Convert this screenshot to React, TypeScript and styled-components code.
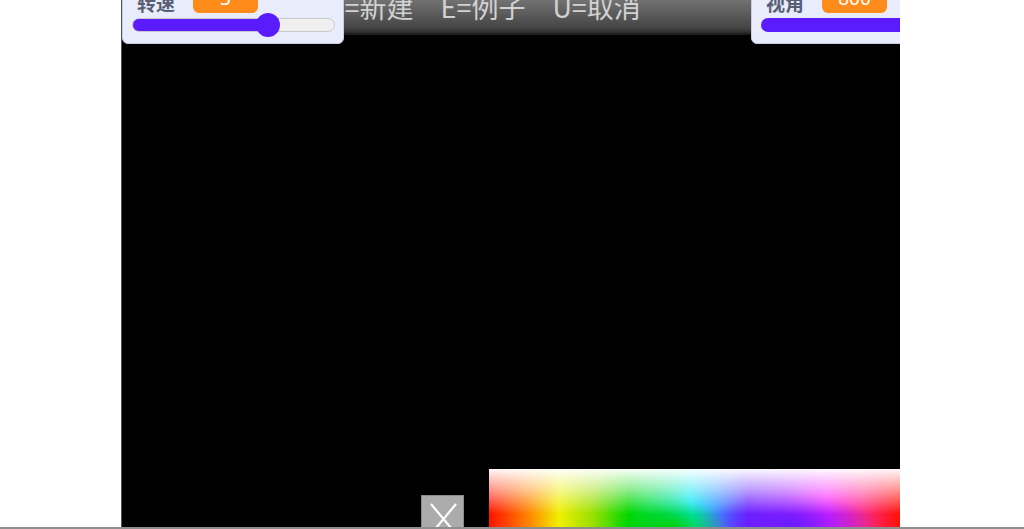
import React from "react";
import styled, { createGlobalStyle } from "styled-components";

const GlobalStyle = createGlobalStyle`
  html, body {
    margin: 0;
    padding: 0;
    background: #fff;
    overflow: hidden;
  }
  body {
    font-family: "Noto Sans CJK SC", "Noto Sans", sans-serif;
  }
`;

const Page = styled.div`
  width: 1024px;
  height: 529px;
  display: flex;
  flex-direction: row;
  box-sizing: border-box;
  border-bottom: 2px solid #8e8e8e;
  background: #fff;
`;

const Side = styled.div<{ $w: number }>`
  width: ${(p) => p.$w}px;
  flex-shrink: 0;
`;

const Stage = styled.div`
  position: relative;
  width: 779px;
  flex-shrink: 0;
  background: #000;
  overflow: hidden;
  border-left: 1px solid #555;
  box-sizing: border-box;
`;

const HelpBar = styled.div`
  position: absolute;
  top: 0;
  left: 0;
  width: 700px;
  height: 35px;
  box-sizing: border-box;
  background: linear-gradient(#727272, #444 85%, #2a2a2a);
  border-bottom: 2px solid #1e1e1e;
  overflow: hidden;
`;

const HelpText = styled.div`
  position: absolute;
  left: 203px;
  top: -11px;
  display: flex;
  gap: 27px;
  color: #d2d2d2;
  font-size: 27px;
  line-height: 36px;
  white-space: nowrap;
`;

const Monitor = styled.div<{ $left: number }>`
  position: absolute;
  top: -18px;
  left: ${(p) => p.$left}px;
  width: 222px;
  height: 62px;
  box-sizing: border-box;
  padding: 0 8px 0 9px;
  background: #e8ecfb;
  border: 1px solid #c9cde0;
  border-radius: 6px;
  display: flex;
  flex-direction: column;
  gap: 5px;
`;

const MonitorHead = styled.div`
  display: flex;
  align-items: flex-start;
  height: 30px;
  padding-left: 5px;
`;

const Label = styled.span`
  width: 56px;
  color: #575e75;
  font-weight: 700;
  font-size: 19px;
  line-height: 24px;
  margin-top: 8px;
`;

const Value = styled.span`
  width: 65px;
  height: 30px;
  border-radius: 6px;
  background: #ff8c1a;
  color: #fff;
  font-family: "Noto Sans", sans-serif;
  font-size: 19px;
  line-height: 31px;
  text-align: center;
`;

const Track = styled.div<{ $pct: number }>`
  position: relative;
  height: 14px;
  border-radius: 7px;
  box-sizing: border-box;
  border: 1px solid #c9c9c9;
  background: linear-gradient(
    to right,
    #5b1bff 0,
    #5b1bff ${(p) => p.$pct}%,
    #efefef ${(p) => p.$pct}%
  );
`;

const FullTrack = styled.div`
  height: 14px;
  border-radius: 7px;
  background: #5b1bff;
  margin-right: -40px;
`;

const Thumb = styled.div`
  position: absolute;
  top: 50%;
  width: 24px;
  height: 24px;
  border-radius: 50%;
  background: #5b1bff;
  transform: translate(-50%, -50%);
`;

const CloseSprite = styled.div`
  position: absolute;
  left: 299px;
  top: 495px;
  width: 43px;
  height: 40px;
  background: #ababab;
  border: 1px solid #8a8a8a;
  box-sizing: border-box;
`;

const Palette = styled.div`
  position: absolute;
  left: 367px;
  top: 469px;
  width: 412px;
  height: 60px;
  background:
    linear-gradient(rgba(255, 255, 255, 0.97), rgba(255, 255, 255, 0.55) 35%, rgba(255, 255, 255, 0) 75%),
    radial-gradient(ellipse 60px 30px at 180px 60px, #00d000, transparent),
    radial-gradient(ellipse 90px 30px at 300px 55px, #6a1cff, transparent),
    linear-gradient(
      to right,
      #ff1000 0%,
      #ff8a00 10%,
      #f0f000 17%,
      #9be000 25%,
      #00d800 34%,
      #00e070 42%,
      #00e8f0 49%,
      #3a8cff 56%,
      #6a22ff 63%,
      #a020ff 72%,
      #ff20ff 82%,
      #ff2a80 91%,
      #ff1000 100%
    );
`;

export default function App() {
  const speedPct = 67;
  return (
    <>
      <GlobalStyle />
      <Page>
        <Side $w={121} />
        <Stage>
          <HelpBar>
            <HelpText>
              <span>N=新建</span>
              <span>E=例子</span>
              <span>U=取消</span>
            </HelpText>
          </HelpBar>
          <Monitor $left={0}>
            <MonitorHead>
              <Label>转速</Label>
              <Value>3</Value>
            </MonitorHead>
            <Track $pct={speedPct}>
              <Thumb style={{ left: `${speedPct}%` }} />
            </Track>
          </Monitor>
          <Monitor $left={629}>
            <MonitorHead>
              <Label>视角</Label>
              <Value>800</Value>
            </MonitorHead>
            <FullTrack />
          </Monitor>
          <CloseSprite>
            <svg width="41" height="38" viewBox="0 0 41 38">
              <path d="M9 8 L34 38 M34 8 L9 38" stroke="#fff" strokeWidth="2.2" fill="none" />
            </svg>
          </CloseSprite>
          <Palette />
        </Stage>
        <Side $w={124} />
      </Page>
    </>
  );
}
